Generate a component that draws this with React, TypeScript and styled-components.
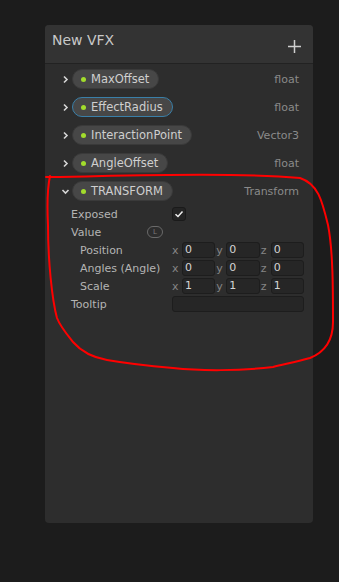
import styled, { createGlobalStyle } from 'styled-components';

const GlobalStyle = createGlobalStyle`
	html, body {
		margin: 0;
		padding: 0;
		background: #1c1c1c;
	}
	body {
		font-family: 'DejaVu Sans', 'Liberation Sans', sans-serif;
	}
`;

type Field = { name: string; type: string; selected?: boolean };

const fields: Field[] = [
	{ name: 'MaxOffset', type: 'float' },
	{ name: 'EffectRadius', type: 'float', selected: true },
	{ name: 'InteractionPoint', type: 'Vector3' },
	{ name: 'AngleOffset', type: 'float' },
];

const vectors = [
	{ label: 'Position', values: ['0', '0', '0'] },
	{ label: 'Angles (Angle)', values: ['0', '0', '0'] },
	{ label: 'Scale', values: ['1', '1', '1'] },
];

const Chevron = ({ open }: { open?: boolean }) => (
	<ChevronBox>
		<svg width="9" height="9" viewBox="0 0 9 9">
			{open ? (
				<path d="M1.5 3 L4.5 6 L7.5 3" fill="none" stroke="#d6d6d6" strokeWidth="1.6" />
			) : (
				<path d="M3 1.5 L6 4.5 L3 7.5" fill="none" stroke="#d6d6d6" strokeWidth="1.6" />
			)}
		</svg>
	</ChevronBox>
);

const App = () => {
	return (
		<>
			<GlobalStyle />
			<Page>
				<Panel>
					<Header>
						<Title>New VFX</Title>
						<AddButton>
							<svg width="13" height="13" viewBox="0 0 13 13">
								<path d="M6.5 0 V13 M0 6.5 H13" stroke="#cfcfcf" strokeWidth="1.5" />
							</svg>
						</AddButton>
					</Header>
					<List>
						{fields.map((f) => (
							<Row key={f.name}>
								<Chevron />
								<Pill selected={f.selected}>
									<Dot />
									{f.name}
								</Pill>
								<TypeName>{f.type}</TypeName>
							</Row>
						))}
						<Row>
							<Chevron open />
							<Pill>
								<Dot />
								TRANSFORM
							</Pill>
							<TypeName>Transform</TypeName>
						</Row>
						<Props>
							<PropRow>
								<PropLabel>Exposed</PropLabel>
								<Checkbox>
									<svg width="10" height="10" viewBox="0 0 10 10">
										<path d="M1.5 5.2 L4 7.5 L8.5 2.5" fill="none" stroke="#f0f0f0" strokeWidth="1.5" />
									</svg>
								</Checkbox>
							</PropRow>
							<PropRow>
								<PropLabel>
									Value
									<LinkBadge>L</LinkBadge>
								</PropLabel>
								<span />
							</PropRow>
							{vectors.map((v) => (
								<PropRow key={v.label}>
									<PropLabel indent>{v.label}</PropLabel>
									<VectorFields>
										{['x', 'y', 'z'].map((axis, i) => (
											<Axis key={axis}>
												<AxisName>{axis}</AxisName>
												<NumberBox>{v.values[i]}</NumberBox>
											</Axis>
										))}
									</VectorFields>
								</PropRow>
							))}
							<PropRow>
								<PropLabel>Tooltip</PropLabel>
								<TextBox />
							</PropRow>
						</Props>
					</List>
				</Panel>
				<Annotation width="339" height="582" viewBox="0 0 339 582">
					<path
						d="M46 177 C120 176 230 172 300 178 C318 184 322 200 328 225 C333 250 333 290 333 322 C333 340 325 352 310 358 C295 362 285 364 273 367 C240 371 200 371 173 368 C150 366 130 364 107 360 C90 357 80 350 73 342 C65 332 60 326 57 318 C52 300 48 260 48 225 C47 205 47 190 50 176"
						fill="none"
						stroke="#ff0000"
						strokeWidth="2"
						strokeLinecap="round"
					/>
				</Annotation>
			</Page>
		</>
	);
};

const Page = styled.div`
	position: relative;
	width: 339px;
	height: 582px;
	padding: 25px 0 0 45px;
	box-sizing: border-box;
`;

const Panel = styled.div`
	width: 268px;
	height: 498px;
	background: #2d2d2d;
	border-radius: 4px;
	overflow: hidden;
`;

const Header = styled.div`
	display: flex;
	justify-content: space-between;
	height: 39px;
	padding: 7px 12px 0 7px;
	box-sizing: border-box;
	background: #333333;
	border-bottom: 1px solid #222222;
`;

const Title = styled.div`
	font-size: 14px;
	color: #c8c8c8;
`;

const AddButton = styled.div`
	display: flex;
	padding-top: 8px;
`;

const List = styled.div`
	display: flex;
	flex-direction: column;
	padding-top: 1px;
`;

const Row = styled.div`
	display: flex;
	align-items: center;
	height: 28px;
	padding: 0 14px 0 14px;
`;

const ChevronBox = styled.div`
	display: flex;
	width: 13px;
	justify-content: center;
`;

const Pill = styled.div<{ selected?: boolean }>`
	display: flex;
	align-items: center;
	gap: 5px;
	height: 20px;
	box-sizing: border-box;
	padding: 0 9px 0 8px;
	border-radius: 10px;
	background: #474747;
	border: 1px solid ${(props) => (props.selected ? '#3a7fa8' : '#3a3a3a')};
	font-size: 11.5px;
	color: #cfcfcf;
`;

const Dot = styled.span`
	width: 5px;
	height: 5px;
	border-radius: 50%;
	background: #a2dc2c;
`;

const TypeName = styled.div`
	margin-left: auto;
	font-size: 11px;
	color: #8a8a8a;
`;

const Props = styled.div`
	display: flex;
	flex-direction: column;
	padding: 0 9px 0 26px;
`;

const PropRow = styled.div`
	display: grid;
	grid-template-columns: 101px 1fr;
	align-items: center;
	height: 18px;
`;

const PropLabel = styled.div<{ indent?: boolean }>`
	display: flex;
	align-items: center;
	justify-content: space-between;
	padding-left: ${(props) => (props.indent ? '9px' : '0')};
	padding-right: 9px;
	font-size: 11px;
	color: #b4b4b4;
	white-space: nowrap;
`;

const LinkBadge = styled.span`
	display: flex;
	align-items: center;
	justify-content: center;
	width: 14px;
	height: 10px;
	border: 1px solid #6a6a6a;
	border-radius: 6px;
	font-size: 7px;
	color: #7a7a7a;
`;

const Checkbox = styled.div`
	display: flex;
	align-items: center;
	justify-content: center;
	width: 14px;
	height: 14px;
	box-sizing: border-box;
	background: #242424;
	border: 1px solid #1a1a1a;
	border-radius: 3px;
`;

const VectorFields = styled.div`
	display: grid;
	grid-template-columns: repeat(3, 1fr);
	gap: 1px;
`;

const Axis = styled.div`
	display: flex;
	align-items: center;
`;

const AxisName = styled.span`
	width: 10px;
	font-size: 11px;
	color: #858585;
`;

const NumberBox = styled.div`
	flex: 1;
	height: 16px;
	box-sizing: border-box;
	padding-left: 2px;
	background: #262626;
	border: 1px solid #1d1d1d;
	border-radius: 3px;
	font-size: 11px;
	line-height: 14px;
	color: #d4d4d4;
`;

const TextBox = styled.div`
	height: 16px;
	box-sizing: border-box;
	background: #262626;
	border: 1px solid #1d1d1d;
	border-radius: 3px;
`;

const Annotation = styled.svg`
	position: absolute;
	top: 0;
	left: 0;
	pointer-events: none;
`;

export default App;
